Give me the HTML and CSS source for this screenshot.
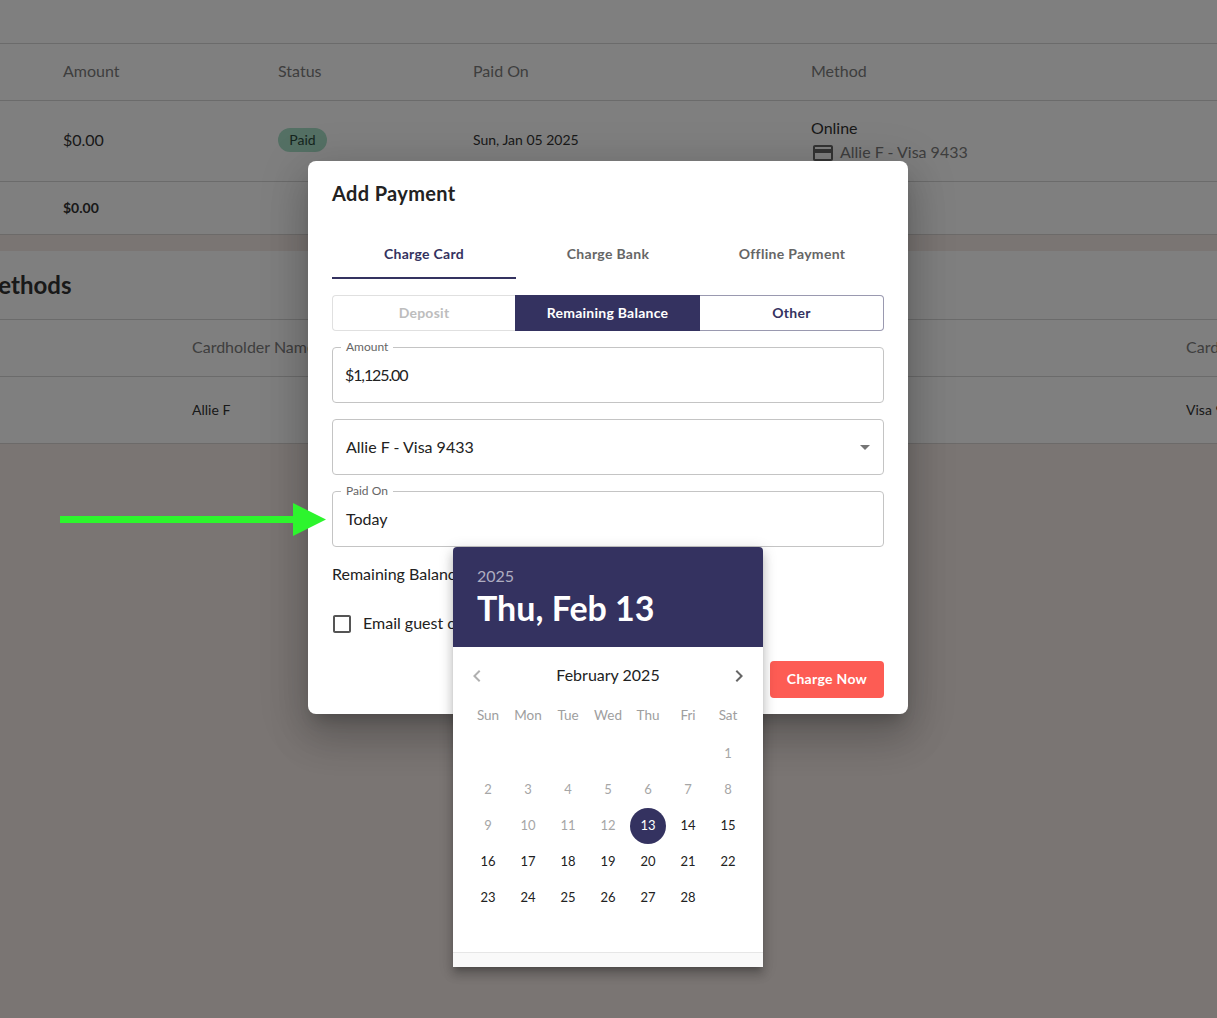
FILE: index.html
```html
<!DOCTYPE html>
<html lang="en">
<head>
    <meta charset="UTF-8" />
    <meta name="viewport" content="width=device-width, initial-scale=1" />
    <title>Add Payment</title>
    <link rel="stylesheet" href="styles.css">
</head>
<body>

<div class="page">
    <section class="card card-payments">
        <div class="row row-top"></div>
        <div class="row row-head cols-payments">
            <span>Amount</span>
            <span>Status</span>
            <span>Paid On</span>
            <span>Method</span>
        </div>
        <div class="row row-body cols-payments">
            <span class="val">$0.00</span>
            <span><span class="badge">Paid</span></span>
            <span class="val-small">Sun, Jan 05 2025</span>
            <div class="method">
                <div class="val">Online</div>
                <div class="method-card">
                    <svg class="icon" viewBox="0 0 24 24"><path d="M20 4H4c-1.11 0-1.99.89-1.99 2L2 18c0 1.11.89 2 2 2h16c1.11 0 2-.89 2-2V6c0-1.11-.89-2-2-2zm0 14H4v-6h16v6zm0-10H4V6h16v2z"/></svg>
                    Allie F - Visa 9433
                </div>
            </div>
        </div>
        <div class="row row-total cols-payments">
            <span class="total">$0.00</span>
        </div>
    </section>

    <section class="card card-methods">
        <h2 class="methods-title">Payment Methods</h2>
        <div class="row row-head cols-methods">
            <span>Cardholder Name</span>
            <span>Card Type</span>
        </div>
        <div class="row row-method cols-methods">
            <span class="val-small">Allie F</span>
            <span class="val-small">Visa 9433</span>
        </div>
    </section>
</div>

<div class="backdrop"></div>

<div class="modal">
    <h3 class="modal-title">Add Payment</h3>

    <div class="tabs">
        <div class="tab active">Charge Card</div>
        <div class="tab">Charge Bank</div>
        <div class="tab">Offline Payment</div>
    </div>

    <div class="toggle">
        <div class="seg seg-disabled">Deposit</div>
        <div class="seg seg-on">Remaining Balance</div>
        <div class="seg seg-other">Other</div>
    </div>

    <div class="field">
        <label class="field-label">Amount</label>
        <span class="amount">$1,125.00</span>
    </div>

    <div class="field field-select">
        Allie F - Visa 9433
        <span class="caret"></span>
    </div>

    <div class="field">
        <label class="field-label">Paid On</label>
        Today
    </div>

    <div class="balance">Remaining Balance: $1,125.00</div>

    <div class="check-row">
        <svg class="check" viewBox="0 0 24 24"><path d="M19 5v14H5V5h14m0-2H5c-1.1 0-2 .9-2 2v14c0 1.1.9 2 2 2h14c1.1 0 2-.9 2-2V5c0-1.1-.9-2-2-2z"/></svg>
        <span class="check-text">Email guest confirmation</span>
    </div>

    <div class="modal-foot">
        <div class="btn-charge">Charge Now</div>
    </div>
</div>

<div class="picker">
    <div class="picker-head">
        <div class="picker-year">2025</div>
        <div class="picker-date">Thu, Feb 13</div>
    </div>
    <div class="picker-month">
        <svg class="chev chev-off" viewBox="0 0 24 24"><path d="M15.41 7.41 14 6l-6 6 6 6 1.41-1.41L10.83 12z"/></svg>
        <span class="month-name">February 2025</span>
        <svg class="chev" viewBox="0 0 24 24"><path d="M10 6 8.59 7.41 13.17 12l-4.58 4.59L10 18l6-6z"/></svg>
    </div>
    <div class="weekdays">
        <span>Sun</span><span>Mon</span><span>Tue</span><span>Wed</span><span>Thu</span><span>Fri</span><span>Sat</span>
    </div>
    <div class="days">
        <span></span><span></span><span></span><span></span><span></span><span></span><span class="off">1</span>
        <span class="off">2</span><span class="off">3</span><span class="off">4</span><span class="off">5</span><span class="off">6</span><span class="off">7</span><span class="off">8</span>
        <span class="off">9</span><span class="off">10</span><span class="off">11</span><span class="off">12</span><span class="sel">13</span><span>14</span><span>15</span>
        <span>16</span><span>17</span><span>18</span><span>19</span><span>20</span><span>21</span><span>22</span>
        <span>23</span><span>24</span><span>25</span><span>26</span><span>27</span><span>28</span><span></span>
    </div>
    <div class="picker-foot"></div>
</div>

<!-- seta verde da anotacao -->
<svg class="arrow" viewBox="0 0 270 34"><path d="M0 13h233V0l33 16.5L233 33V20H0z"/></svg>

</body>
</html>
```

FILE: styles.css
```css
* {
    box-sizing: border-box;
}
html, body {
    margin: 0;
    padding: 0;
    height: 100%;
    overflow: hidden;
}
body {
    font-family: Lato, "Liberation Sans", sans-serif;
    background-color: #f4ebe6;
    color: #222;
    position: relative;
}
.page {
    height: 1018px;
    overflow: hidden;
}
.card {
    background: #fff;
}
.card-payments {
    height: 235px;
    border-bottom: 1px solid #d8d4d2;
}
.card-methods {
    margin-top: 16px;
    height: 193px;
    border-bottom: 1px solid #d8d4d2;
}
.row {
    border-bottom: 1px solid #d6d6d6;
}
.row:last-child {
    border-bottom: none;
}
.row-top {
    height: 44px;
}
.row-head {
    height: 57px;
    padding-bottom: 4px;
    color: #7c7c7c;
    font-size: 16px;
}
.row-body {
    height: 81px;
    padding-bottom: 3px;
    font-size: 16px;
}
.row-total {
    height: 52px;
    padding-bottom: 2px;
}
.row-method {
    height: 66px;
    padding-bottom: 2px;
}
.cols-payments {
    display: grid;
    grid-template-columns: 215px 195px 338px 1fr;
    padding-left: 63px;
    align-items: center;
}
.cols-methods {
    display: grid;
    grid-template-columns: 994px 200px;
    padding-left: 192px;
    align-items: center;
}
.val {
    font-size: 16px;
    line-height: 24px;
    color: #333;
}
.val-small {
    font-size: 14px;
    color: #333;
}
.total {
    font-size: 14px;
    font-weight: 700;
    color: #333;
}
.badge {
    display: inline-block;
    background: #a9e0c8;
    color: #2b4a3d;
    font-size: 14px;
    line-height: 24px;
    height: 24px;
    width: 49px;
    text-align: center;
    border-radius: 12px;
}
.method {
    margin-top: 2px;
}
.method-card {
    display: flex;
    align-items: center;
    color: #7c7c7c;
    font-size: 16px;
    line-height: 24px;
    gap: 5px;
    margin-top: -1px;
}
.icon {
    width: 24px;
    height: 24px;
    fill: #666;
    margin-top: 2px;
}
.methods-title {
    margin: 0 0 0 -124px;
    height: 69px;
    line-height: 68px;
    font-size: 24px;
    font-weight: 700;
    color: #333;
    border-bottom: 1px solid #d6d6d6;
    width: 1341px;
}
.backdrop {
    position: absolute;
    inset: 0;
    background: rgba(0,0,0,0.5);
}

/* modal */
.modal {
    position: absolute;
    left: 308px;
    top: 161px;
    width: 600px;
    height: 553px;
    padding: 16px 24px;
    background: #fff;
    border-radius: 8px;
    box-shadow: 0 11px 15px -7px rgba(0,0,0,0.2), 0 24px 38px 3px rgba(0,0,0,0.14), 0 9px 46px 8px rgba(0,0,0,0.12);
}
.modal-title {
    margin: 0;
    font-size: 20px;
    font-weight: 700;
    line-height: 32px;
    letter-spacing: 0.35px;
    color: #222;
}
.tabs {
    display: grid;
    grid-template-columns: repeat(3, 1fr);
    margin-top: 22px;
}
.tab {
    height: 48px;
    line-height: 46px;
    text-align: center;
    font-size: 14px;
    font-weight: 700;
    letter-spacing: 0.3px;
    color: #666;
}
.tab.active {
    color: #343260;
    border-bottom: 2px solid #343260;
}
.toggle {
    display: grid;
    grid-template-columns: 183px 185px 184px;
    height: 36px;
    margin-top: 16px;
}
.seg {
    line-height: 34px;
    text-align: center;
    font-size: 14px;
    font-weight: 700;
    letter-spacing: 0.25px;
    border: 1px solid #e0e0e0;
}
.seg-disabled {
    color: #bdbdbd;
    border-right: none;
    border-radius: 4px 0 0 4px;
}
.seg-on {
    background: #343260;
    border-color: #343260;
    color: #fff;
}
.seg-other {
    color: #343260;
    border-color: #9a99b0;
    border-left: none;
    border-radius: 0 4px 4px 0;
}
.field {
    position: relative;
    height: 56px;
    margin-top: 16px;
    padding: 0 13px;
    border: 1px solid #c4c4c4;
    border-radius: 4px;
    font-size: 16px;
    line-height: 54px;
    color: #222;
}
.amount {
    letter-spacing: -1.1px;
    margin-left: -1px;
}
.field-label {
    position: absolute;
    left: 8px;
    top: -8px;
    padding: 0 5px;
    background: #fff;
    font-size: 12px;
    line-height: 14px;
    color: #666;
}
.caret {
    position: absolute;
    right: 13px;
    top: 25px;
    border-left: 5px solid transparent;
    border-right: 5px solid transparent;
    border-top: 5px solid #757575;
}
.balance {
    margin-top: 15px;
    font-size: 16px;
    line-height: 24px;
    color: #222;
}
.check-row {
    display: flex;
    align-items: center;
    height: 24px;
    margin-top: 26px;
    margin-left: -2px;
    font-size: 16px;
    line-height: 24px;
    color: #222;
}
.check {
    width: 24px;
    height: 24px;
    fill: #555;
    margin-right: 9px;
}
.check-text {
    margin-top: -2px;
}
.modal-foot {
    display: flex;
    justify-content: flex-end;
    margin-top: 25px;
}
.btn-charge {
    width: 114px;
    height: 37px;
    line-height: 35px;
    text-align: center;
    background: #fd5c54;
    color: #fff;
    font-size: 14px;
    font-weight: 700;
    letter-spacing: 0.3px;
    border-radius: 4px;
}

/* calendario */
.picker {
    position: absolute;
    left: 453px;
    top: 547px;
    width: 310px;
    height: 420px;
    background: #fff;
    border-radius: 4px 4px 0 0;
    overflow: hidden;
    display: flex;
    flex-direction: column;
    box-shadow: 0 5px 5px -3px rgba(0,0,0,0.2), 0 8px 10px 1px rgba(0,0,0,0.14), 0 3px 14px 2px rgba(0,0,0,0.12);
}
.picker-head {
    height: 100px;
    padding: 20px 24px 0;
    background: #343260;
    color: #fff;
}
.picker-year {
    font-size: 16px;
    line-height: 18px;
    color: #aeadc0;
}
.picker-date {
    font-size: 34px;
    font-weight: 700;
    line-height: 42px;
    margin-top: 2px;
}
.picker-month {
    display: flex;
    justify-content: space-between;
    align-items: center;
    height: 24px;
    margin-top: 17px;
    padding: 0 12px;
    font-size: 16px;
    color: #222;
}
.month-name {
    padding-bottom: 3px;
}
.chev {
    width: 24px;
    height: 24px;
    fill: #666;
}
.chev-off {
    fill: #b0b0b0;
}
.weekdays, .days {
    display: grid;
    grid-template-columns: repeat(7, 40px);
    padding: 0 15px;
}
.weekdays {
    margin-top: 17px;
    height: 20px;
    line-height: 20px;
    text-align: center;
    font-size: 13.5px;
    color: #9e9e9e;
}
.days {
    margin-top: 11px;
    grid-auto-rows: 36px;
    text-align: center;
    font-size: 13px;
    line-height: 34px;
    color: #222;
}
.days .off {
    color: #a6a6a6;
}
.days .sel {
    width: 36px;
    height: 36px;
    margin-left: 2px;
    border-radius: 50%;
    background: #343260;
    color: #fff;
}
.picker-foot {
    margin-top: auto;
    height: 15px;
    background: #f9f9f9;
    border-top: 1px solid #e6e6e6;
}
.arrow {
    position: absolute;
    left: 60px;
    top: 503px;
    width: 270px;
    height: 34px;
    fill: #2df52d;
}
```
